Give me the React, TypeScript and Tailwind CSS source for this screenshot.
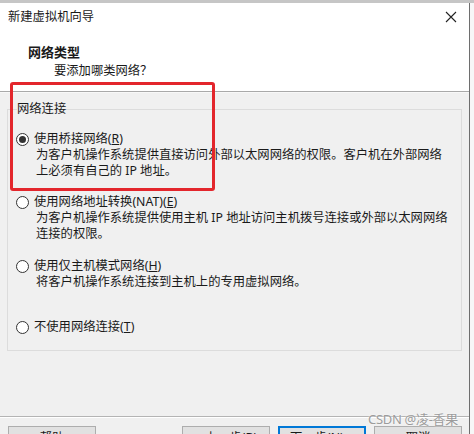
import React from 'react';

const font = "font-['Noto_Sans','Noto_Sans_CJK_SC',sans-serif]";

function Radio({ checked }: { checked?: boolean }) {
  return (
    <span className="flex h-[13px] w-[13px] shrink-0 items-center justify-center rounded-full border border-[#333] bg-white">
      {checked && <span className="h-[7px] w-[7px] rounded-full bg-[#333]" />}
    </span>
  );
}

function Option({ label, hotkey, lines, checked }: { label: string; hotkey: string; lines: string[]; checked?: boolean }) {
  return (
    <div>
      <div className="flex h-[16px] items-center gap-[5px]">
        <Radio checked={checked} />
        <span>
          {label}(<span className="underline">{hotkey}</span>)
        </span>
      </div>
      {lines.map((l) => (
        <div key={l} className="h-[16px] pl-[20px] leading-[16px]">
          {l}
        </div>
      ))}
    </div>
  );
}

export default function App() {
  return (
    <div className={`relative h-[434px] w-[474px] overflow-hidden bg-[#f7f7f7] text-[12.3px] leading-[16px] text-[#1a1a1a] ${font}`}>
      <div className="h-[3px] bg-[#c6c6c6]" />
      <div className="flex">
        <div className="flex w-[470px] flex-col border-r border-[#6e6e6e] bg-[#f0f0f0]">
          {/* header */}
          <div className="h-[88px] bg-white">
            <div className="flex h-[28px] items-center justify-between pl-[8px] pr-[12px]">
              <span>新建虚拟机向导</span>
              <svg width="12" height="12" viewBox="0 0 12 12" className="text-[#222]">
                <path d="M1 1L11 11M11 1L1 11" stroke="currentColor" strokeWidth="1.1" />
              </svg>
            </div>
            <div className="mt-[13px] pl-[28px] text-[13px] font-bold">网络类型</div>
            <div className="mt-[3px] pl-[54px]">要添加哪类网络？</div>
          </div>
          <div className="h-[2px] border-t border-[#a9a9a9] bg-[#f8f8f8]" />

          {/* body */}
          <div className="h-[323px] pt-[8px]">
            <fieldset className="mx-[7px] border border-[#dcdcdc] px-[8px] pb-[15px] pt-[14px]">
              <legend className="ml-[1px] leading-[16px]">网络连接</legend>
              <div className="flex flex-col">
                <Option
                  checked
                  label="使用桥接网络"
                  hotkey="R"
                  lines={['为客户机操作系统提供直接访问外部以太网网络的权限。客户机在外部网络', '上必须有自己的 IP 地址。']}
                />
                <div className="mt-[15px]">
                  <Option
                    label="使用网络地址转换(NAT)"
                    hotkey="E"
                    lines={['为客户机操作系统提供使用主机 IP 地址访问主机拨号连接或外部以太网网络', '连接的权限。']}
                  />
                </div>
                <div className="mt-[16px]">
                  <Option label="使用仅主机模式网络" hotkey="H" lines={['将客户机操作系统连接到主机上的专用虚拟网络。']} />
                </div>
                <div className="mt-[29px]">
                  <Option label="不使用网络连接" hotkey="T" lines={[]} />
                </div>
              </div>
            </fieldset>
          </div>

          {/* footer */}
          <div className="h-[2px] border-t border-[#b4b4b4] bg-white" />
          <div className="flex gap-[8px] pl-[8px] pt-[8px]">
            <button className="h-[23px] w-[88px] border border-[#adadad] bg-[#e1e1e1]">帮助</button>
            <div className="flex-1" />
            <button className="h-[23px] w-[88px] border border-[#adadad] bg-[#e1e1e1]">&lt; 上一步(B)</button>
            <button className="h-[23px] w-[88px] border-2 border-[#0078d7] bg-[#e1e1e1]">下一步(N) &gt;</button>
            <button className="mr-[7px] h-[23px] w-[88px] border border-[#adadad] bg-[#e1e1e1]">取消</button>
          </div>
        </div>
      </div>

      {/* annotation */}
      <div className="absolute left-[10px] top-[82px] h-[109px] w-[205px] rounded-[3px] border-[3px] border-[#e3262c]" />
      {/* watermark */}
      <div className="absolute left-[368px] top-[411px] text-[13px] tracking-[-0.3px] text-[#9c9c9c] [text-shadow:0_0_2px_#fff]">
        CSDN @凌-香果
      </div>
    </div>
  );
}
